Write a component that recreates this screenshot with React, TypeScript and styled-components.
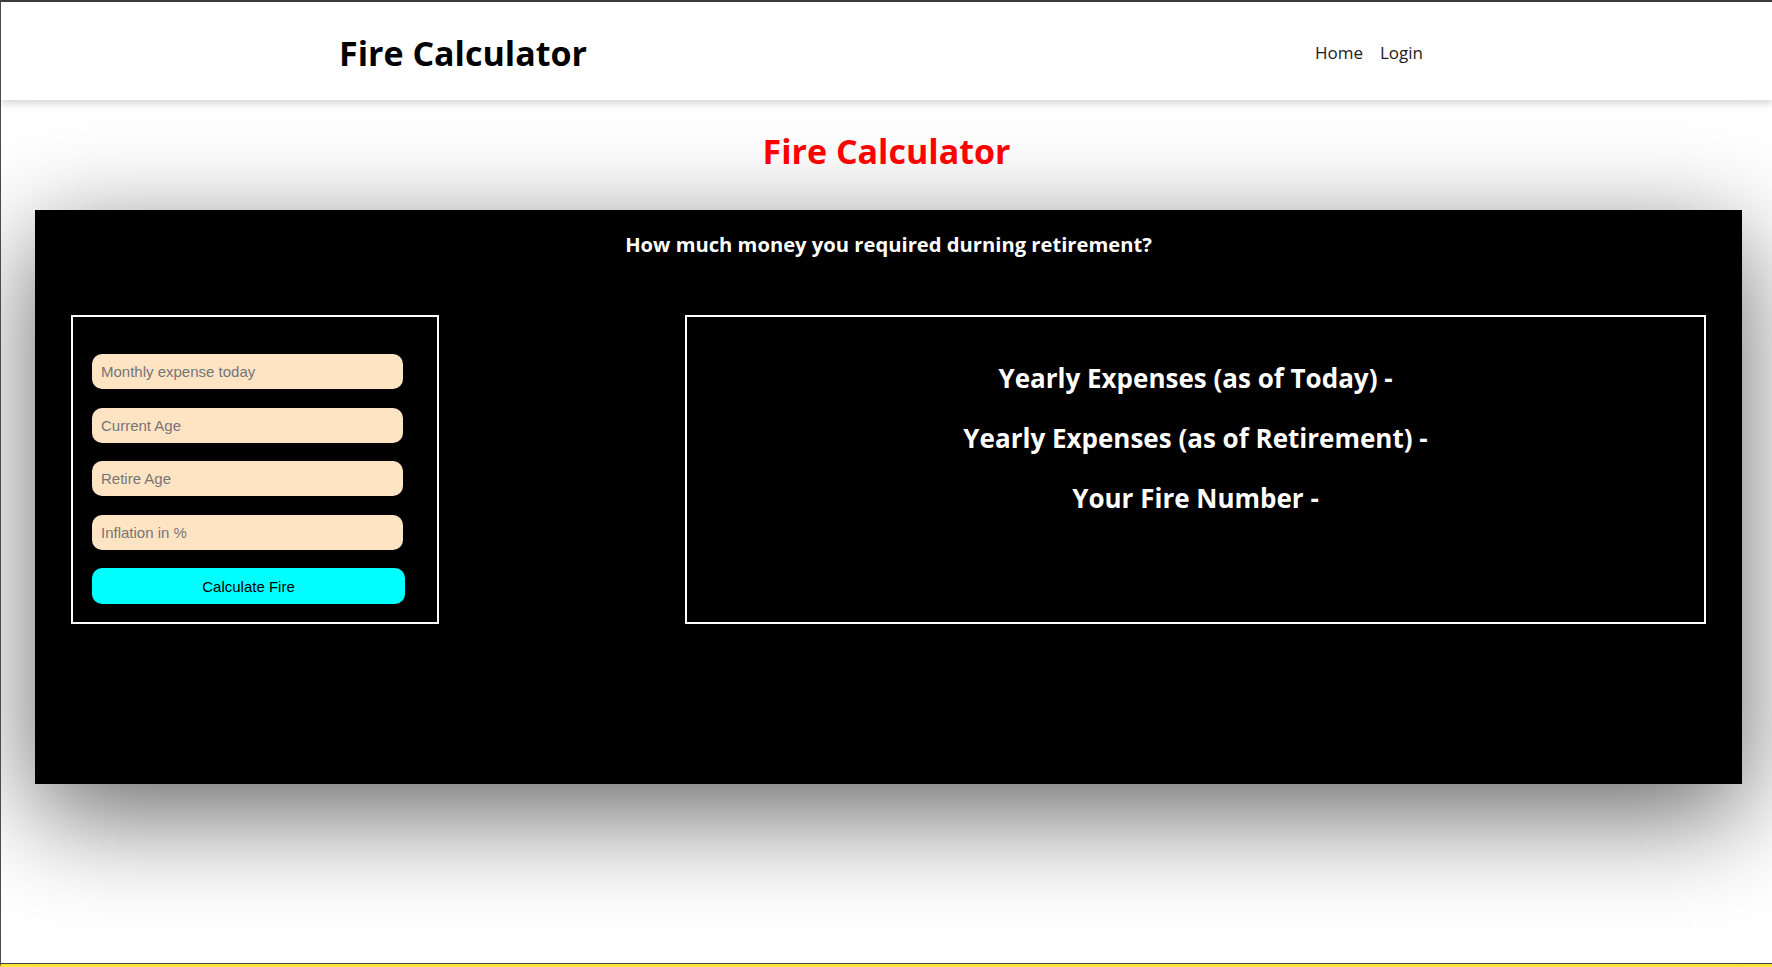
import styled, { createGlobalStyle } from "styled-components";

const GlobalStyle = createGlobalStyle`
  html, body {
    margin: 0;
    padding: 0;
    height: 100%;
    overflow: hidden;
    background: #fff;
  }
  #root {
    height: 100%;
  }
  * {
    box-sizing: border-box;
  }
`;

const Frame = styled.div`
  height: 100%;
  display: flex;
  flex-direction: column;
  border-top: 2px solid #3b3b3b;
  border-left: 1px solid #4b4b4b;
  border-bottom: 3px solid #fde33d;
  overflow: hidden;
`;

const Page = styled.div`
  flex: 1;
  display: flex;
  flex-direction: column;
  background: #fff;
  border-bottom: 1px solid #424242;
  font-family: "Open Sans", "Noto Sans", sans-serif;
`;

const Header = styled.header`
  position: relative;
  z-index: 1;
  height: 98px;
  display: flex;
  align-items: center;
  justify-content: space-between;
  padding: 3px 349px 0 338px;
  background: #fff;
  box-shadow: 0 3px 8px rgba(0, 0, 0, 0.18);
`;

const Brand = styled.h1`
  margin: 0;
  font-size: 34px;
  font-weight: 700;
  color: #000;
`;

const Nav = styled.nav`
  display: flex;
  gap: 17px;
`;

const NavLink = styled.a`
  font-size: 17px;
  color: #1b1b1b;
  text-decoration: none;
`;

const Title = styled.h1`
  margin: 28px 0 0;
  text-align: center;
  font-size: 34px;
  font-weight: 700;
  color: #ff0000;
`;

const Card = styled.section`
  margin: 36px 30px 0 34px;
  padding: 20px 36px 160px;
  background: #000;
  box-shadow: 0 30px 100px rgba(0, 0, 0, 0.6);
`;

const Question = styled.h3`
  margin: 0;
  text-align: center;
  font-size: 20.2px;
  font-weight: 700;
  color: #fff;
`;

const Panels = styled.div`
  display: flex;
  justify-content: space-between;
  align-items: stretch;
  margin-top: 57px;
`;

const FormPanel = styled.form`
  width: 368px;
  display: flex;
  flex-direction: column;
  gap: 18.5px;
  padding: 37px 33px 18px 19px;
  border: 2px solid #fff;
`;

const Field = styled.input`
  width: 311px;
  height: 35px;
  padding: 0 9px;
  border: none;
  border-radius: 10px;
  outline: none;
  background: #ffe4c4;
  font-family: "Liberation Sans", Arial, sans-serif;
  font-size: 15px;
  color: #000;

  &::placeholder {
    color: #757575;
  }
`;

const CalcButton = styled.button`
  width: 313px;
  height: 36px;
  border: none;
  border-radius: 10px;
  background: #00ffff;
  font-family: "Liberation Sans", Arial, sans-serif;
  font-size: 15px;
  color: #000;
  cursor: pointer;
`;

const ResultPanel = styled.div`
  width: 1021px;
  display: flex;
  flex-direction: column;
  align-items: center;
  gap: 24px;
  padding-top: 43px;
  border: 2px solid #fff;
`;

const ResultLine = styled.h2`
  margin: 0;
  font-size: 26px;
  font-weight: 700;
  line-height: 36px;
  color: #fff;
`;

const fields = ["Monthly expense today", "Current Age", "Retire Age", "Inflation in %"];

const results = [
  "Yearly Expenses (as of Today) -",
  "Yearly Expenses (as of Retirement) -",
  "Your Fire Number -",
];

export default function App() {
  return (
    <>
      <GlobalStyle />
      <Frame>
        <Page>
          <Header>
            <Brand>Fire Calculator</Brand>
            <Nav>
              <NavLink href="#">Home</NavLink>
              <NavLink href="#">Login</NavLink>
            </Nav>
          </Header>
          <main>
            <Title>Fire Calculator</Title>
            <Card>
              <Question>How much money you required durning retirement?</Question>
              <Panels>
                <FormPanel onSubmit={(e) => e.preventDefault()}>
                  {fields.map((f) => (
                    <Field key={f} type="text" placeholder={f} />
                  ))}
                  <CalcButton type="submit">Calculate Fire</CalcButton>
                </FormPanel>
                <ResultPanel>
                  {results.map((r) => (
                    <ResultLine key={r}>{r}</ResultLine>
                  ))}
                </ResultPanel>
              </Panels>
            </Card>
          </main>
        </Page>
      </Frame>
    </>
  );
}
